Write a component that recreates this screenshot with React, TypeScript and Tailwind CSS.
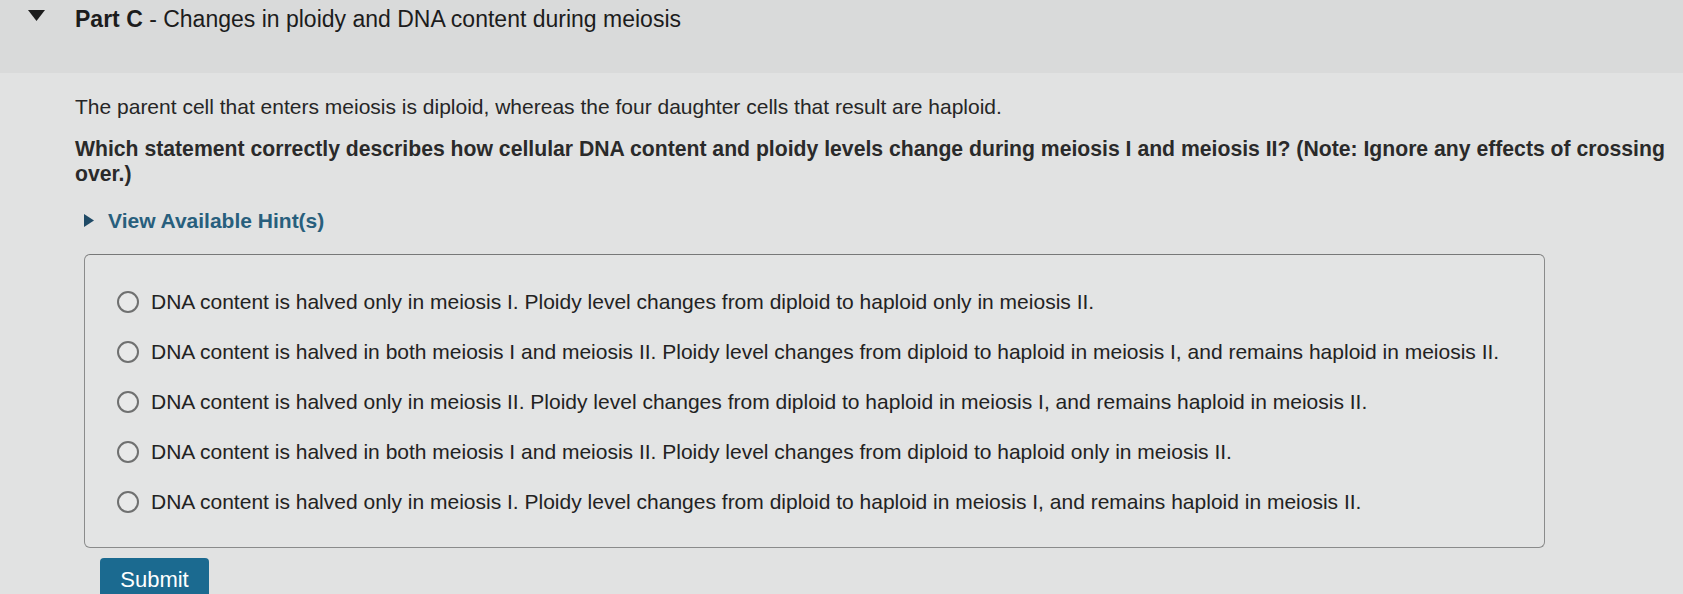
import React from "react";

const options = [
  "DNA content is halved only in meiosis I. Ploidy level changes from diploid to haploid only in meiosis II.",
  "DNA content is halved in both meiosis I and meiosis II. Ploidy level changes from diploid to haploid in meiosis I, and remains haploid in meiosis II.",
  "DNA content is halved only in meiosis II. Ploidy level changes from diploid to haploid in meiosis I, and remains haploid in meiosis II.",
  "DNA content is halved in both meiosis I and meiosis II. Ploidy level changes from diploid to haploid only in meiosis II.",
  "DNA content is halved only in meiosis I. Ploidy level changes from diploid to haploid in meiosis I, and remains haploid in meiosis II.",
];

export default function App() {
  return (
    <div className="w-[1683px] h-[594px] overflow-hidden bg-[#e1e2e2] text-[#262626] font-['Liberation_Sans',Arial,sans-serif]">
      <div className="h-[73px] bg-[#d9dada] flex items-start pt-[5px]">
        <div className="w-[75px] flex pt-[5px] pl-[28px]">
          <svg width="17" height="11" viewBox="0 0 17 11">
            <polygon points="0,0 17,0 8.5,11" fill="#1c1c1c" />
          </svg>
        </div>
        <div className="text-[23px] leading-[28px] text-[#1c1c1c]">
          <span className="font-bold">Part C</span> - Changes in ploidy and DNA content during meiosis
        </div>
      </div>

      <div className="pl-[75px]">
        <p className="mt-[21px] text-[21px] leading-[25px]">
          The parent cell that enters meiosis is diploid, whereas the four daughter cells that result are haploid.
        </p>
        <p className="mt-[17px] text-[21.2px] leading-[25px] font-bold text-[#2a2a2a] whitespace-nowrap">
          Which statement correctly describes how cellular DNA content and ploidy levels change during meiosis I and meiosis II? (Note: Ignore any effects of crossing
          <br />
          over.)
        </p>
        <div className="mt-[22px] flex items-center h-[25px]">
          <svg width="10" height="13" viewBox="0 0 10 13" className="ml-[9px]">
            <polygon points="0,0 10,6.5 0,13" fill="#1f4a66" />
          </svg>
          <span className="ml-[14px] text-[21px] leading-[25px] font-bold text-[#285f7d]">View Available Hint(s)</span>
        </div>

        <div className="mt-[21px] ml-[9px] w-[1461px] h-[294px] border border-[#8a8b8b] border-t-[#777878] rounded-[6px] bg-[#e3e4e4] pl-[32px] pt-[34px] flex flex-col gap-[25px]">
          {options.map((o, i) => (
            <label key={i} className="flex items-center h-[25px]">
              <span className="w-[22px] h-[22px] rounded-full border-2 border-[#6f7070] bg-[#e8e9e9] shrink-0" />
              <span className="ml-[12px] text-[21px] leading-[25px] whitespace-nowrap text-[#222222]">{o}</span>
            </label>
          ))}
        </div>

        <button className="mt-[10px] ml-[25px] w-[109px] h-[46px] rounded-[4px] bg-[#1b6a90] text-white text-[22px] leading-[25px] pb-[4px] flex items-center justify-center">
          Submit
        </button>
      </div>
    </div>
  );
}
